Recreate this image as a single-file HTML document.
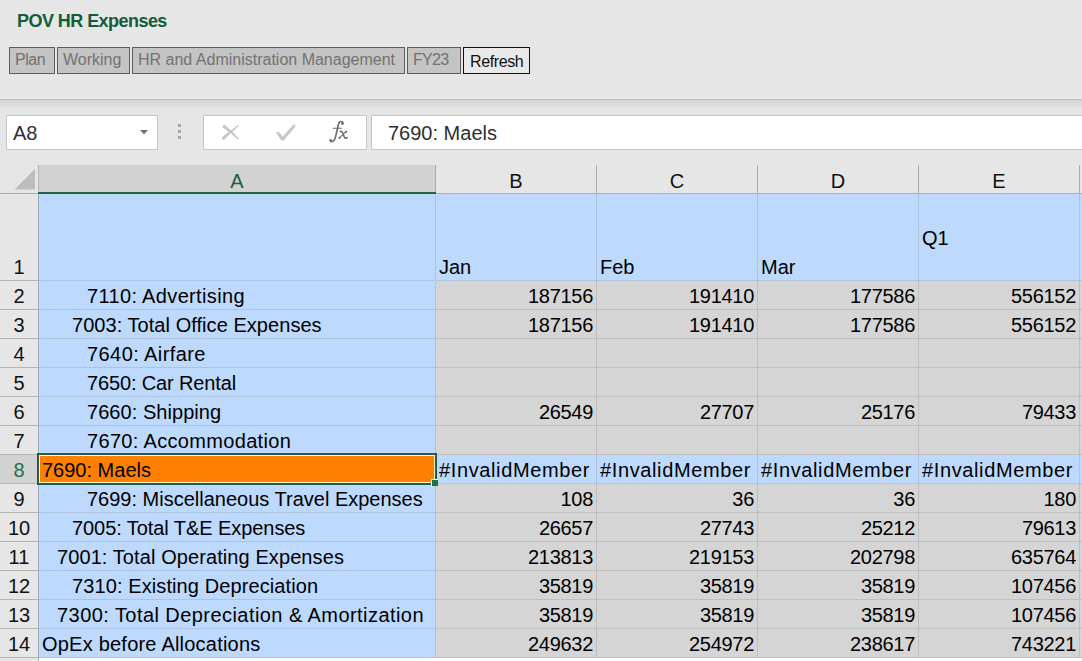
<!DOCTYPE html>
<html><head><meta charset="utf-8"><title>POV HR Expenses</title>
<style>
*{margin:0;padding:0;box-sizing:border-box}
html,body{width:1082px;height:661px;overflow:hidden;background:#e6e6e6;font-family:"Liberation Sans",sans-serif}
.a{position:absolute}
.t{position:absolute;white-space:pre;line-height:20px;height:20px}
.btn{position:absolute;top:47px;height:27px;background:#c4c4c4;border:1px solid #5c5c5c;color:#727272;font-size:16px;line-height:23px;white-space:pre}
.g{font-size:20px;color:#000}
.r{text-align:right}
</style></head><body>

<div class="a" style="left:0;top:0;width:1082px;height:99px;background:#e6e6e6"></div>
<div class="t" style="left:17px;top:11px;font-size:18px;font-weight:bold;color:#125c38;letter-spacing:-0.55px">POV HR Expenses</div>
<div class="btn" style="left:9px;width:46px;padding-left:5px;letter-spacing:-0.5px">Plan</div>
<div class="btn" style="left:57px;width:73px;padding-left:5px;letter-spacing:0px">Working</div>
<div class="btn" style="left:132px;width:273px;padding-left:5px;letter-spacing:0px">HR and Administration Management</div>
<div class="btn" style="left:407px;width:54px;padding-left:5px;letter-spacing:-0.7px">FY23</div>
<div class="btn" style="left:463px;width:67px;background:#e9e9e9;border-color:#111;color:#111;padding-left:6px;line-height:27px;letter-spacing:-0.4px">Refresh</div>
<div class="a" style="left:0;top:98px;width:1082px;height:1px;background:#ececec"></div>
<div class="a" style="left:0;top:99px;width:1082px;height:1px;background:#bcbcbc"></div>
<div class="a" style="left:0;top:100px;width:1082px;height:9px;background:linear-gradient(#d3d3d3,#e6e6e6)"></div>
<div class="a" style="left:6px;top:115px;width:152px;height:35px;background:#fff;border:1px solid #c6c6c6"></div>
<div class="t" style="left:13px;top:123px;font-size:20px;color:#2f2f2f">A8</div>
<svg class="a" style="left:139px;top:129px" width="10" height="6"><path d="M1 1 L9 1 L5 5.5 Z" fill="#707070"/></svg>
<div class="a" style="left:178px;top:124px;width:3px;height:3px;background:#a8a8a8"></div>
<div class="a" style="left:178px;top:130px;width:3px;height:3px;background:#a8a8a8"></div>
<div class="a" style="left:178px;top:136px;width:3px;height:3px;background:#a8a8a8"></div>
<div class="a" style="left:203px;top:115px;width:164px;height:35px;background:#fff;border:1px solid #c6c6c6"></div>
<svg class="a" style="left:203px;top:115px" width="164" height="35" viewBox="203 115 164 35"><path d="M224.4 124.8 Q231.2 129.8 238.8 138.5 Q238.8 139.8 237.9 139.4 Q230.5 132.6 222.5 127.2 Q222.3 124.6 224.4 124.8 Z" fill="#c6c6c6"/><path d="M222.0 137.3 Q229.4 131.0 238.2 125.1 Q239.5 125.1 239.0 126.0 Q231.2 132.0 224.0 139.7 Q221.6 140.4 222.0 137.3 Z" fill="#c6c6c6"/><path d="M275.8 132.2 Q277.8 131.2 279.6 132.6 L282.6 136.4 L293.6 124.6 Q295.8 124.0 295.4 126.4 L284.4 139.8 Q282.6 141.6 280.8 139.8 Z" fill="#c8c8c8"/></svg>
<svg class="a" style="left:320px;top:115px" width="40" height="35" viewBox="320 115 40 35"><g fill="none" stroke="#6c6c6c" stroke-linecap="round"><path d="M342.8 122.6 C341.6 120.9 339.6 121.2 338.8 123.4 C337.8 126.4 336.6 132.8 335.4 137.4 C334.6 140.3 333 142.1 331 141.5" stroke-width="1.7"/><path d="M333.2 128.2 L341.3 128.2" stroke-width="1.1"/><path d="M340.4 131.4 C342.4 130.9 343.1 133 343.7 135.4 C344.2 137.6 345.2 138.8 347 137.7" stroke-width="1.6"/><path d="M346.3 131.4 C344.4 132.4 341.6 135.8 339.4 138.1" stroke-width="1.1"/></g><g fill="#6c6c6c"><circle cx="342.5" cy="123.6" r="1.35"/><circle cx="330.7" cy="140.4" r="1.35"/><circle cx="346.2" cy="131.9" r="1.05"/><circle cx="339.5" cy="137.9" r="1.1"/></g></svg>
<div class="a" style="left:371px;top:115px;width:720px;height:35px;background:#fff;border:1px solid #c6c6c6"></div>
<div class="t" style="left:388px;top:123px;font-size:20px;color:#2f2f2f">7690: Maels</div>
<div class="a" style="left:0;top:165px;width:1082px;height:29px;background:#e6e6e6"></div>
<div class="a" style="left:39px;top:165px;width:396px;height:27px;background:#d2d2d2"></div>
<div class="t g" style="left:39px;top:171px;width:396px;text-align:center;color:#1f5f3e">A</div>
<div class="t g" style="left:436px;top:171px;width:160px;text-align:center;color:#111">B</div>
<div class="t g" style="left:597px;top:171px;width:160px;text-align:center;color:#111">C</div>
<div class="t g" style="left:758px;top:171px;width:160px;text-align:center;color:#111">D</div>
<div class="t g" style="left:919px;top:171px;width:160px;text-align:center;color:#111">E</div>
<svg class="a" style="left:0;top:165px" width="38" height="28"><path d="M14.5 24.5 L35 24.5 L35 4 Z" fill="#bdbdbd"/></svg>
<div class="a" style="left:0;top:194px;width:38px;height:467px;background:#e6e6e6"></div>
<div class="a" style="left:0;top:455px;width:38px;height:28px;background:#d2d2d2"></div>
<div class="a" style="left:39px;top:194px;width:1043px;height:86px;background:#bdd9fe"></div>
<div class="a" style="left:39px;top:280px;width:396px;height:378px;background:#bdd9fe"></div>
<div class="a" style="left:436px;top:280px;width:646px;height:378px;background:#d5d5d5"></div>
<div class="a" style="left:436px;top:454px;width:646px;height:29px;background:#bdd9fe"></div>
<div class="a" style="left:39px;top:658px;width:1043px;height:3px;background:#fff"></div>
<div class="a" style="left:0;top:193px;width:1082px;height:1px;background:#adadad"></div>
<div class="a" style="left:435px;top:165px;width:1px;height:28px;background:#acacac"></div>
<div class="a" style="left:596px;top:165px;width:1px;height:28px;background:#acacac"></div>
<div class="a" style="left:757px;top:165px;width:1px;height:28px;background:#acacac"></div>
<div class="a" style="left:918px;top:165px;width:1px;height:28px;background:#acacac"></div>
<div class="a" style="left:1079px;top:165px;width:1px;height:28px;background:#acacac"></div>
<div class="a" style="left:38px;top:165px;width:1px;height:28px;background:#b4b4b4"></div>
<div class="a" style="left:38px;top:193px;width:1px;height:468px;background:#9ca7b6"></div>
<div class="a" style="left:39px;top:194px;width:1px;height:464px;background:#c9dcf6"></div>
<div class="a" style="left:0;top:280px;width:38px;height:1px;background:#b4b4b4"></div>
<div class="a" style="left:39px;top:280px;width:396px;height:1px;background:#afc2dc"></div>
<div class="a" style="left:436px;top:280px;width:646px;height:1px;background:#afc2dc"></div>
<div class="a" style="left:0;top:309px;width:38px;height:1px;background:#b4b4b4"></div>
<div class="a" style="left:39px;top:309px;width:396px;height:1px;background:#afc2dc"></div>
<div class="a" style="left:436px;top:309px;width:646px;height:1px;background:#bfbfbf"></div>
<div class="a" style="left:0;top:338px;width:38px;height:1px;background:#b4b4b4"></div>
<div class="a" style="left:39px;top:338px;width:396px;height:1px;background:#afc2dc"></div>
<div class="a" style="left:436px;top:338px;width:646px;height:1px;background:#bfbfbf"></div>
<div class="a" style="left:0;top:367px;width:38px;height:1px;background:#b4b4b4"></div>
<div class="a" style="left:39px;top:367px;width:396px;height:1px;background:#afc2dc"></div>
<div class="a" style="left:436px;top:367px;width:646px;height:1px;background:#bfbfbf"></div>
<div class="a" style="left:0;top:396px;width:38px;height:1px;background:#b4b4b4"></div>
<div class="a" style="left:39px;top:396px;width:396px;height:1px;background:#afc2dc"></div>
<div class="a" style="left:436px;top:396px;width:646px;height:1px;background:#bfbfbf"></div>
<div class="a" style="left:0;top:425px;width:38px;height:1px;background:#b4b4b4"></div>
<div class="a" style="left:39px;top:425px;width:396px;height:1px;background:#afc2dc"></div>
<div class="a" style="left:436px;top:425px;width:646px;height:1px;background:#bfbfbf"></div>
<div class="a" style="left:0;top:454px;width:38px;height:1px;background:#b4b4b4"></div>
<div class="a" style="left:39px;top:454px;width:396px;height:1px;background:#afc2dc"></div>
<div class="a" style="left:436px;top:454px;width:646px;height:1px;background:#bfbfbf"></div>
<div class="a" style="left:0;top:483px;width:38px;height:1px;background:#b4b4b4"></div>
<div class="a" style="left:39px;top:483px;width:396px;height:1px;background:#afc2dc"></div>
<div class="a" style="left:436px;top:483px;width:646px;height:1px;background:#bfbfbf"></div>
<div class="a" style="left:0;top:512px;width:38px;height:1px;background:#b4b4b4"></div>
<div class="a" style="left:39px;top:512px;width:396px;height:1px;background:#afc2dc"></div>
<div class="a" style="left:436px;top:512px;width:646px;height:1px;background:#bfbfbf"></div>
<div class="a" style="left:0;top:541px;width:38px;height:1px;background:#b4b4b4"></div>
<div class="a" style="left:39px;top:541px;width:396px;height:1px;background:#afc2dc"></div>
<div class="a" style="left:436px;top:541px;width:646px;height:1px;background:#bfbfbf"></div>
<div class="a" style="left:0;top:570px;width:38px;height:1px;background:#b4b4b4"></div>
<div class="a" style="left:39px;top:570px;width:396px;height:1px;background:#afc2dc"></div>
<div class="a" style="left:436px;top:570px;width:646px;height:1px;background:#bfbfbf"></div>
<div class="a" style="left:0;top:599px;width:38px;height:1px;background:#b4b4b4"></div>
<div class="a" style="left:39px;top:599px;width:396px;height:1px;background:#afc2dc"></div>
<div class="a" style="left:436px;top:599px;width:646px;height:1px;background:#bfbfbf"></div>
<div class="a" style="left:0;top:628px;width:38px;height:1px;background:#b4b4b4"></div>
<div class="a" style="left:39px;top:628px;width:396px;height:1px;background:#afc2dc"></div>
<div class="a" style="left:436px;top:628px;width:646px;height:1px;background:#bfbfbf"></div>
<div class="a" style="left:0;top:657px;width:38px;height:1px;background:#b4b4b4"></div>
<div class="a" style="left:39px;top:657px;width:396px;height:1px;background:#afc2dc"></div>
<div class="a" style="left:436px;top:657px;width:646px;height:1px;background:#bfbfbf"></div>
<div class="a" style="left:435px;top:194px;width:1px;height:86px;background:#afc2dc"></div>
<div class="a" style="left:435px;top:281px;width:1px;height:377px;background:#bfbfbf"></div>
<div class="a" style="left:596px;top:194px;width:1px;height:86px;background:#afc2dc"></div>
<div class="a" style="left:596px;top:281px;width:1px;height:377px;background:#bfbfbf"></div>
<div class="a" style="left:596px;top:455px;width:1px;height:28px;background:#afc2dc"></div>
<div class="a" style="left:757px;top:194px;width:1px;height:86px;background:#afc2dc"></div>
<div class="a" style="left:757px;top:281px;width:1px;height:377px;background:#bfbfbf"></div>
<div class="a" style="left:757px;top:455px;width:1px;height:28px;background:#afc2dc"></div>
<div class="a" style="left:918px;top:194px;width:1px;height:86px;background:#afc2dc"></div>
<div class="a" style="left:918px;top:281px;width:1px;height:377px;background:#bfbfbf"></div>
<div class="a" style="left:918px;top:455px;width:1px;height:28px;background:#afc2dc"></div>
<div class="a" style="left:1079px;top:194px;width:1px;height:86px;background:#afc2dc"></div>
<div class="a" style="left:1079px;top:281px;width:1px;height:377px;background:#bfbfbf"></div>
<div class="a" style="left:1079px;top:455px;width:1px;height:28px;background:#afc2dc"></div>
<div class="a" style="left:38px;top:192px;width:398px;height:2px;background:#1f6443"></div>
<div class="t g" style="left:0;top:257px;width:38px;text-align:center;color:#111">1</div>
<div class="t g" style="left:0;top:286px;width:38px;text-align:center;color:#111">2</div>
<div class="t g" style="left:0;top:315px;width:38px;text-align:center;color:#111">3</div>
<div class="t g" style="left:0;top:344px;width:38px;text-align:center;color:#111">4</div>
<div class="t g" style="left:0;top:373px;width:38px;text-align:center;color:#111">5</div>
<div class="t g" style="left:0;top:402px;width:38px;text-align:center;color:#111">6</div>
<div class="t g" style="left:0;top:431px;width:38px;text-align:center;color:#111">7</div>
<div class="t g" style="left:0;top:460px;width:38px;text-align:center;color:#2a6b4c">8</div>
<div class="t g" style="left:0;top:489px;width:38px;text-align:center;color:#111">9</div>
<div class="t g" style="left:0;top:518px;width:38px;text-align:center;color:#111">10</div>
<div class="t g" style="left:0;top:547px;width:38px;text-align:center;color:#111">11</div>
<div class="t g" style="left:0;top:576px;width:38px;text-align:center;color:#111">12</div>
<div class="t g" style="left:0;top:605px;width:38px;text-align:center;color:#111">13</div>
<div class="t g" style="left:0;top:634px;width:38px;text-align:center;color:#111">14</div>
<div class="t g" style="left:87px;top:286px;letter-spacing:0.35px">7110: Advertising</div>
<div class="t g" style="left:72px;top:315px;letter-spacing:0.05px">7003: Total Office Expenses</div>
<div class="t g" style="left:87px;top:344px;letter-spacing:0.42px">7640: Airfare</div>
<div class="t g" style="left:87px;top:373px;letter-spacing:-0.14px">7650: Car Rental</div>
<div class="t g" style="left:87px;top:402px;letter-spacing:0.05px">7660: Shipping</div>
<div class="t g" style="left:87px;top:431px;letter-spacing:0.33px">7670: Accommodation</div>
<div class="t g" style="left:87px;top:489px;letter-spacing:0px">7699: Miscellaneous Travel Expenses</div>
<div class="t g" style="left:72px;top:518px;letter-spacing:-0.07px">7005: Total T&amp;E Expenses</div>
<div class="t g" style="left:57px;top:547px;letter-spacing:0.09px">7001: Total Operating Expenses</div>
<div class="t g" style="left:72px;top:576px;letter-spacing:0.1px">7310: Existing Depreciation</div>
<div class="t g" style="left:57px;top:605px;letter-spacing:0.44px">7300: Total Depreciation &amp; Amortization</div>
<div class="t g" style="left:42px;top:634px;letter-spacing:0.22px">OpEx before Allocations</div>
<div class="t g" style="left:439px;top:257px">Jan</div>
<div class="t g" style="left:600px;top:257px">Feb</div>
<div class="t g" style="left:761px;top:257px">Mar</div>
<div class="t g" style="left:922px;top:228px">Q1</div>
<div class="t g r" style="left:435px;width:158px;top:286px;letter-spacing:-0.3px">187156</div>
<div class="t g r" style="left:596px;width:158px;top:286px;letter-spacing:-0.3px">191410</div>
<div class="t g r" style="left:757px;width:158px;top:286px;letter-spacing:-0.3px">177586</div>
<div class="t g r" style="left:918px;width:158px;top:286px;letter-spacing:-0.3px">556152</div>
<div class="t g r" style="left:435px;width:158px;top:315px;letter-spacing:-0.3px">187156</div>
<div class="t g r" style="left:596px;width:158px;top:315px;letter-spacing:-0.3px">191410</div>
<div class="t g r" style="left:757px;width:158px;top:315px;letter-spacing:-0.3px">177586</div>
<div class="t g r" style="left:918px;width:158px;top:315px;letter-spacing:-0.3px">556152</div>
<div class="t g r" style="left:435px;width:158px;top:402px;letter-spacing:-0.3px">26549</div>
<div class="t g r" style="left:596px;width:158px;top:402px;letter-spacing:-0.3px">27707</div>
<div class="t g r" style="left:757px;width:158px;top:402px;letter-spacing:-0.3px">25176</div>
<div class="t g r" style="left:918px;width:158px;top:402px;letter-spacing:-0.3px">79433</div>
<div class="t g" style="left:439px;top:460px;letter-spacing:0.62px">#InvalidMember</div>
<div class="t g" style="left:600px;top:460px;letter-spacing:0.62px">#InvalidMember</div>
<div class="t g" style="left:761px;top:460px;letter-spacing:0.62px">#InvalidMember</div>
<div class="t g" style="left:922px;top:460px;letter-spacing:0.62px">#InvalidMember</div>
<div class="t g r" style="left:435px;width:158px;top:489px;letter-spacing:-0.3px">108</div>
<div class="t g r" style="left:596px;width:158px;top:489px;letter-spacing:-0.3px">36</div>
<div class="t g r" style="left:757px;width:158px;top:489px;letter-spacing:-0.3px">36</div>
<div class="t g r" style="left:918px;width:158px;top:489px;letter-spacing:-0.3px">180</div>
<div class="t g r" style="left:435px;width:158px;top:518px;letter-spacing:-0.3px">26657</div>
<div class="t g r" style="left:596px;width:158px;top:518px;letter-spacing:-0.3px">27743</div>
<div class="t g r" style="left:757px;width:158px;top:518px;letter-spacing:-0.3px">25212</div>
<div class="t g r" style="left:918px;width:158px;top:518px;letter-spacing:-0.3px">79613</div>
<div class="t g r" style="left:435px;width:158px;top:547px;letter-spacing:-0.3px">213813</div>
<div class="t g r" style="left:596px;width:158px;top:547px;letter-spacing:-0.3px">219153</div>
<div class="t g r" style="left:757px;width:158px;top:547px;letter-spacing:-0.3px">202798</div>
<div class="t g r" style="left:918px;width:158px;top:547px;letter-spacing:-0.3px">635764</div>
<div class="t g r" style="left:435px;width:158px;top:576px;letter-spacing:-0.3px">35819</div>
<div class="t g r" style="left:596px;width:158px;top:576px;letter-spacing:-0.3px">35819</div>
<div class="t g r" style="left:757px;width:158px;top:576px;letter-spacing:-0.3px">35819</div>
<div class="t g r" style="left:918px;width:158px;top:576px;letter-spacing:-0.3px">107456</div>
<div class="t g r" style="left:435px;width:158px;top:605px;letter-spacing:-0.3px">35819</div>
<div class="t g r" style="left:596px;width:158px;top:605px;letter-spacing:-0.3px">35819</div>
<div class="t g r" style="left:757px;width:158px;top:605px;letter-spacing:-0.3px">35819</div>
<div class="t g r" style="left:918px;width:158px;top:605px;letter-spacing:-0.3px">107456</div>
<div class="t g r" style="left:435px;width:158px;top:634px;letter-spacing:-0.3px">249632</div>
<div class="t g r" style="left:596px;width:158px;top:634px;letter-spacing:-0.3px">254972</div>
<div class="t g r" style="left:757px;width:158px;top:634px;letter-spacing:-0.3px">238617</div>
<div class="t g r" style="left:918px;width:158px;top:634px;letter-spacing:-0.3px">743221</div>
<div class="a" style="left:37px;top:453px;width:400px;height:32px;border:2px solid #245c48"></div>
<div class="a" style="left:39px;top:455px;width:396px;height:28px;border:1px solid #fff6d0;background:#ff8000"></div>
<div class="t g" style="left:42px;top:460px">7690: Maels</div>
<div class="a" style="left:431px;top:479px;width:7px;height:7px;background:#fff"></div>
<div class="a" style="left:432px;top:480px;width:6px;height:6px;background:#217346"></div>
</body></html>
